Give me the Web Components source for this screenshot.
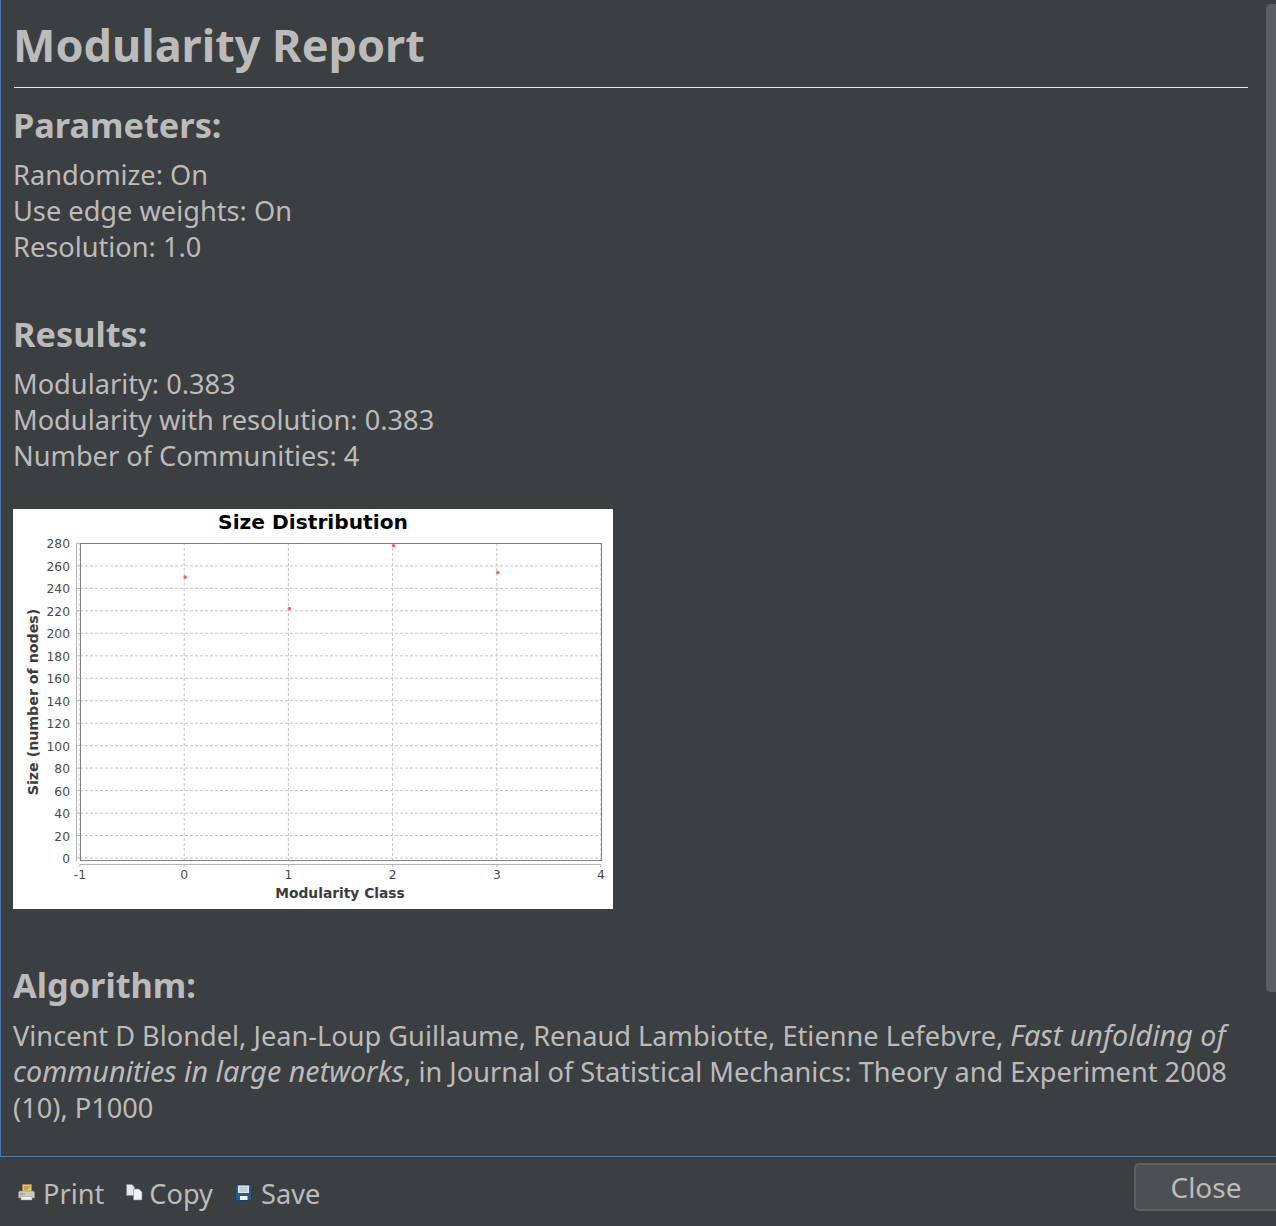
<!DOCTYPE html>
<html>
<head>
<meta charset="utf-8">
<title>Modularity Report</title>
<style>
  html, body { margin: 0; height: 100%; background: #3c3f41; }
  body { font-family: "Noto Sans", sans-serif; color: #bbbbbb; overflow: hidden; }
  i { font-size: 28.7px; line-height: 0; }
</style>
</head>
<body>
<report-dialog>
  <report-heading level="1">Modularity Report</report-heading>
  <report-heading>Parameters:</report-heading>
  <report-lines>
    <div>Randomize: On</div>
    <div>Use edge weights: On</div>
    <div>Resolution: 1.0</div>
  </report-lines>
  <report-heading spaced>Results:</report-heading>
  <report-lines>
    <div>Modularity: 0.383</div>
    <div>Modularity with resolution: 0.383</div>
    <div>Number of Communities: 4</div>
  </report-lines>
  <size-chart></size-chart>
  <report-heading spaced>Algorithm:</report-heading>
  <report-lines style="padding-top: 11px">
    <div>Vincent D Blondel, Jean-Loup Guillaume, Renaud Lambiotte, Etienne Lefebvre, <i>Fast unfolding of communities in large networks</i>, in Journal of Statistical Mechanics: Theory and Experiment 2008 (10), P1000</div>
  </report-lines>

  <tool-link slot="footer" icon="print">Print</tool-link>
  <tool-link slot="footer" icon="copy">Copy</tool-link>
  <tool-link slot="footer" icon="save">Save</tool-link>
  <close-button slot="close">Close</close-button>
</report-dialog>

<script>
class ReportDialog extends HTMLElement {
  constructor() {
    super();
    this.attachShadow({ mode: 'open' });
    this.shadowRoot.innerHTML = `
      <style>
        :host {
          display: grid;
          grid-template-rows: 1157px 69px;
          height: 1226px;
          background: #3c3f41;
        }
        .pane {
          position: relative;
          border-left: 1px solid #4a78a8;
          border-bottom: 1px solid #4a78a8;
          padding: 0 28px 0 13px;
          overflow: hidden;
        }
        .thumb {
          position: absolute;
          right: 0;
          top: 4px;
          width: 10px;
          height: 988px;
          background: #5a5f63;
          border-radius: 5px 0 0 5px;
        }
        .footer {
          display: flex;
          justify-content: space-between;
          align-items: flex-start;
        }
        .tools {
          display: flex;
          gap: 22px;
          padding: 18px 0 0 18px;
        }
      </style>
      <div class="pane"><slot></slot><div class="thumb"></div></div>
      <div class="footer">
        <div class="tools"><slot name="footer"></slot></div>
        <slot name="close"></slot>
      </div>
    `;
  }
}

class ReportHeading extends HTMLElement {
  constructor() {
    super();
    this.attachShadow({ mode: 'open' });
    this.shadowRoot.innerHTML = `
      <style>
        :host {
          display: block;
          font-weight: 700;
          font-size: 34.3px;
          line-height: 45px;
          color: #bbbbbb;
          text-indent: -1px;
        }
        :host([spaced]) { margin-top: 20px; }
        :host([level="1"]) {
          font-size: 45px;
          line-height: 63px;
          padding: 13px 0 11px;
          border-bottom: 1px solid #e8e8e8;
          margin-bottom: 14px;
        }
      </style>
      <slot></slot>
    `;
  }
}

class ReportLines extends HTMLElement {
  constructor() {
    super();
    this.attachShadow({ mode: 'open' });
    this.shadowRoot.innerHTML = `
      <style>
        :host {
          display: block;
          font-size: 27.2px;
          line-height: 36px;
          padding: 10px 0 26px;
          margin-left: -1px;
        }
      </style>
      <slot></slot>
    `;
  }
}

const CHART_TICKS = [280, 260, 240, 220, 200, 180, 160, 140, 120, 100, 80, 60, 40, 20, 0];

class SizeChart extends HTMLElement {
  constructor() {
    super();
    this.attachShadow({ mode: 'open' });
    const yOf = v => 349 - v * 1.1235;
    const xOf = v => 67 + (v + 1) * 104.2;
    let grid = '';
    for (const t of CHART_TICKS) {
      const y = yOf(t).toFixed(1);
      grid += `<line class="g" x1="67" x2="588" y1="${y}" y2="${y}"/>`;
      grid += `<line class="a" x1="63" x2="67" y1="${y}" y2="${y}"/>`;
      grid += `<text class="t" x="57" y="${(+y + 5).toFixed(1)}" text-anchor="end">${t}</text>`;
    }
    for (let v = -1; v <= 4; v++) {
      const x = xOf(v).toFixed(1);
      grid += `<line class="g" x1="${x}" x2="${x}" y1="34" y2="351"/>`;
      grid += `<line class="a" x1="${x}" x2="${x}" y1="355" y2="358"/>`;
      grid += `<text class="t" x="${x}" y="370" text-anchor="middle">${v}</text>`;
    }
    const dots = [[0, 250], [1, 222], [2, 278], [3, 254]]
      .map(([x, y]) => `<circle cx="${(xOf(x) + 1).toFixed(1)}" cy="${yOf(y).toFixed(1)}" r="1.8" fill="#ff5a60"/>`)
      .join('');
    this.shadowRoot.innerHTML = `
      <style>
        :host { display: block; width: 600px; height: 400px; margin: 9px 0 53px -1px; }
        svg { display: block; background: #fff; }
        text { font-family: "DejaVu Sans", sans-serif; }
        .g { stroke: #c4c4c4; stroke-width: 1; stroke-dasharray: 3 2; }
        .a { stroke: #b5b5b5; stroke-width: 1; }
        .t { font-size: 12.3px; fill: #4a4a4a; }
        .lbl { font-size: 13.8px; font-weight: 700; fill: #3c3c3c; }
      </style>
      <svg width="600" height="400" viewBox="0 0 600 400">
        <text x="300" y="20" text-anchor="middle" font-size="20.2" font-weight="700" fill="#000">Size Distribution</text>
        ${grid}
        <rect x="67.5" y="34.5" width="521" height="317" fill="none" stroke="#808080"/>
        <line class="a" x1="63.5" x2="63.5" y1="34" y2="352"/>
        <line class="a" x1="67" x2="588" y1="355.5" y2="355.5"/>
        ${dots}
        <text class="lbl" x="327" y="389" text-anchor="middle">Modularity Class</text>
        <text class="lbl" style="font-size:14.2px" transform="translate(25 193) rotate(-90)" text-anchor="middle">Size (number of nodes)</text>
      </svg>
    `;
  }
}

const TOOL_ICONS = {
  print: `<rect x="4.500" y=".5" width="9" height="8" fill="#e8c860" stroke="#a88a3a" stroke-width=".7"/>
    <path d="M6 3h6M6 5h4" stroke="#8a7030" stroke-width=".8"/>
    <path d="M1.500 7h14l1 1.500v5.500H.5V8.500z" fill="#c9c9c9" stroke="#8c8c8c" stroke-width=".6"/>
    <rect x="2" y="9.500" width="2.500" height="1" fill="#d05a50"/><rect x="5" y="9.500" width="2" height="1" fill="#6ab04c"/>
    <rect x="3" y="12.500" width="11" height="3.500" fill="#f0f0f0" stroke="#8c8c8c" stroke-width=".5"/>`,
  copy: `<path d="M.5.5h5.500l2.500 2.500v8.500H.5z" fill="#dfe5ee" stroke="#7f8896" stroke-width=".6"/>
    <path d="M7.500 5h5.500l3 3v8H7.500z" fill="#eef1f6" stroke="#7f8896" stroke-width=".6"/>`,
  save: `<path d="M1 .5h15l.5.5v15l-.5.5H1L.5 16V1z" fill="#245a8c" stroke="#143c60" stroke-width=".7"/>
    <rect x="3" y="1.500" width="11" height="7.500" fill="#dfe4ea"/>
    <path d="M4.500 3.500h8M4.500 5.200h8M4.500 7h8" stroke="#9aa6b2" stroke-width=".7"/>
    <rect x="5" y="12" width="7.500" height="4" fill="#f2f4f6"/>`
};

class ToolLink extends HTMLElement {
  constructor() {
    super();
    this.attachShadow({ mode: 'open' });
    this.shadowRoot.innerHTML = `
      <style>
        :host {
          display: inline-flex;
          align-items: center;
          gap: 8px;
          font-size: 27.2px;
          line-height: 37px;
          color: #bbbbbb;
        }
        :host([icon="copy"]) { gap: 6px; }
        :host([icon="save"]) { gap: 9px; }
        svg { width: 17px; height: 17px; flex: none; margin-top: -3px; }
      </style>
      <svg viewBox="0 0 17 17">${TOOL_ICONS[this.getAttribute('icon')] || ''}</svg>
      <slot></slot>
    `;
  }
}

class CloseButton extends HTMLElement {
  constructor() {
    super();
    this.attachShadow({ mode: 'open' });
    this.shadowRoot.innerHTML = `
      <style>
        :host {
          display: flex;
          align-items: center;
          justify-content: center;
          box-sizing: border-box;
          width: 142px;
          height: 48px;
          margin-top: 6px;
          background: #4c5052;
          border: 2px solid #5e6060;
          border-right: 0;
          border-radius: 5px 0 0 5px;
          font-size: 28px;
          color: #bbbbbb;
        }
      </style>
      <slot></slot>
    `;
  }
}

customElements.define('report-dialog', ReportDialog);
customElements.define('report-heading', ReportHeading);
customElements.define('report-lines', ReportLines);
customElements.define('size-chart', SizeChart);
customElements.define('tool-link', ToolLink);
customElements.define('close-button', CloseButton);
</script>
</body>
</html>
